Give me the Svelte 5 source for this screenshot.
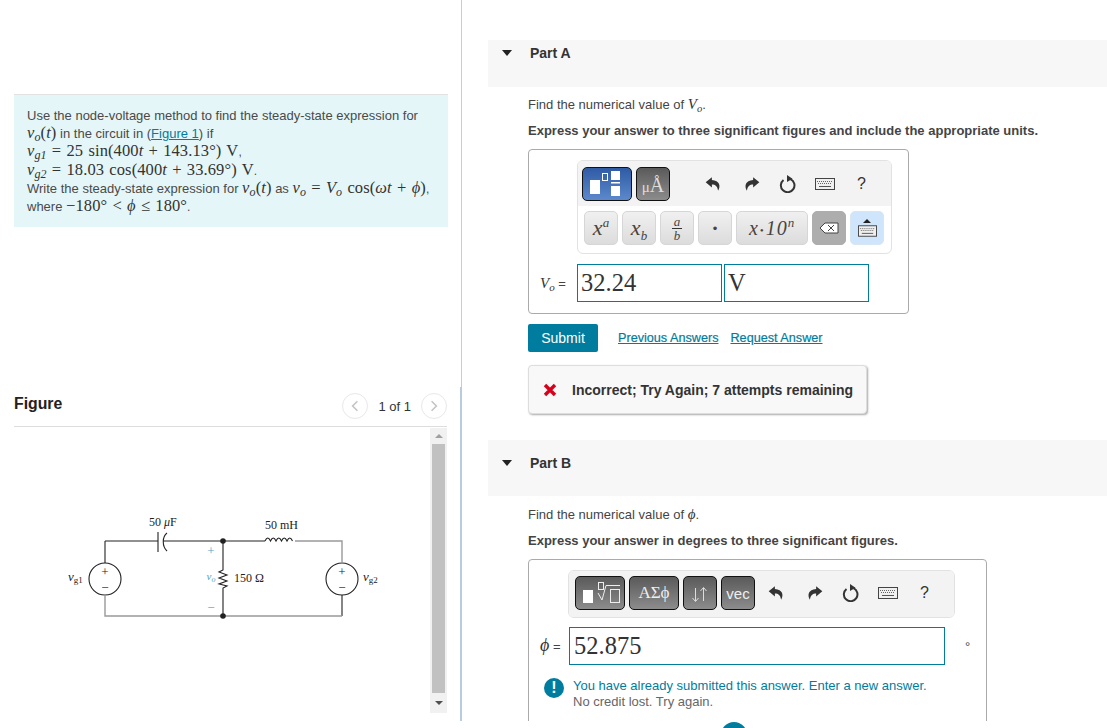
<script>
  const lines = ["You have already submitted this answer. Enter a new answer.", "No credit lost. Try again."];
</script>

{#snippet undo()}
  <svg class="ico" viewBox="0 0 16 16" width="18" height="18"><path d="M7 2 L1.500 6.500 L7 11 V8.500 C10 8.500 12 10 12.500 14 C15 10 14 5 7 4.500 Z" fill="#333" /></svg>
{/snippet}
{#snippet redo()}
  <svg class="ico" viewBox="0 0 16 16" width="18" height="18"><path d="M9 2 L14.500 6.500 L9 11 V8.500 C6 8.500 4 10 3.500 14 C1 10 2 5 9 4.500 Z" fill="#333" /></svg>
{/snippet}
{#snippet reset()}
  <svg class="ico" viewBox="0 0 18 18" width="18" height="18"><path d="M4.500 5 A6.800 6.800 0 1 0 11.500 4.200" fill="none" stroke="#333" stroke-width="2" /><path d="M8 0 L13.500 3.800 L8 7 Z" fill="#333" /></svg>
{/snippet}
{#snippet keys(w = 20)}
  <svg class="ico" viewBox="0 0 20 12" width={w} height="12">
    <rect x="0.500" y="0.500" width="19" height="11" fill="#f0f0f0" stroke="#444" />
    <path d="M2 3.500 H18 M3 5.500 H17" stroke="#666" stroke-dasharray="1 1" />
    <path d="M4 8.500 H16" stroke="#555" />
  </svg>
{/snippet}

<div class="page">
  <section class="left">
    <div class="problem">
      <p>Use the node-voltage method to find the steady-state expression for</p>
      <p><span class="m"><i>v<sub>o</sub></i>(<i>t</i>)</span> in the circuit in (<a href="#f">Figure 1</a>) if</p>
      <p><span class="m"><i>v<sub>g1</sub></i> = 25 sin(400<i>t</i> + 143.13°) V</span><small>,</small></p>
      <p><span class="m"><i>v<sub>g2</sub></i> = 18.03 cos(400<i>t</i> + 33.69°) V</span><small>.</small></p>
      <p>Write the steady-state expression for <span class="m"><i>v<sub>o</sub></i>(<i>t</i>)</span> as <span class="m"><i>v<sub>o</sub></i> = <i>V<sub>o</sub></i> cos(<i>ωt</i> + <i>ϕ</i>)</span><small>,</small></p>
      <p>where <span class="m">−180° &lt; <i>ϕ</i> ≤ 180°</span><small>.</small></p>
    </div>

    <div class="fig-head">
      <h2>Figure</h2>
      <div class="pager">
        <span class="round"><svg viewBox="0 0 10 14" width="8" height="12"><path d="M8 1 L2 7 L8 13" fill="none" stroke="#c4c4c4" stroke-width="2" /></svg></span>
        <span class="count">1 of 1</span>
        <span class="round"><svg viewBox="0 0 10 14" width="8" height="12"><path d="M2 1 L8 7 L2 13" fill="none" stroke="#c4c4c4" stroke-width="2" /></svg></span>
      </div>
    </div>

    <div class="fig-body">
      <svg class="circuit" viewBox="0 -3 416 285" width="416" height="285">
        <g fill="none" stroke="#222" stroke-width="1.100">
          <path d="M91 110 H144" />
          <path d="M91 110 V132" />
          <path d="M144 101 V121 M153 102 C148 106 148 115 153 120" />
          <path d="M149 110 H251" />
          <path d="M209 110 V139 L205 141 L213 144 L205 147 L213 150 L205 153 L213 155 L209 157 V185" />
          <path d="M251 110 q2.750 -6 5.500 0 q2.750 -6 5.500 0 q2.750 -6 5.500 0 q2.750 -6 5.500 0 q2.750 -6 5.500 0" />
          <circle cx="91" cy="148" r="16" />
          <circle cx="328" cy="148" r="16" />
          <path d="M328 164 V185" />
          <path d="M91 164 V185 H328" stroke="#999" stroke-width="1.400" />
          <path d="M281 110 H328 V132" stroke="#999" stroke-width="1.400" />
        </g>
        <circle cx="209" cy="110" r="2.800" fill="#222" />
        <circle cx="209" cy="185" r="2.800" fill="#222" />
        <g fill="#222" font-family="Liberation Serif, serif" font-size="12">
          <text x="135" y="95">50 <tspan font-style="italic">μ</tspan>F</text>
          <text x="251" y="98">50 mH</text>
          <text x="220" y="151">150 Ω</text>
          <g text-anchor="middle" font-size="13">
            <text x="91" y="145">+</text>
            <text x="91" y="161">−</text>
            <text x="328" y="145">+</text>
            <text x="328" y="161">−</text>
          </g>
          <text x="54" y="150" font-style="italic" font-size="13">v<tspan font-size="9" dy="2" font-style="normal">g1</tspan></text>
          <text x="349" y="150" font-style="italic" font-size="13">v<tspan font-size="9" dy="2" font-style="normal">g2</tspan></text>
        </g>
        <g fill="#4ea6c8" font-family="Liberation Serif, serif" font-size="13" text-anchor="middle">
          <text x="197" y="124">+</text>
          <text x="197" y="181">−</text>
          <text x="197" y="149" font-size="11" font-style="italic">v<tspan font-size="8" dy="2">o</tspan></text>
        </g>
      </svg>
      <div class="scroll">
        <div class="cap up-cap"><span class="up"></span></div>
        <span class="thumb"></span>
        <div class="cap down-cap"><span class="down"></span></div>
      </div>
    </div>
    <span class="resizer"></span>
  </section>

  <section class="right">
    <header class="part part-a"><span class="tri"></span><b>Part A</b></header>
    <p class="q">Find the numerical value of <span class="m"><i>V<sub>o</sub></i></span>.</p>
    <p class="q strong">Express your answer to three significant figures and include the appropriate units.</p>

    <div class="answer a">
      <div class="tools">
        <div class="tools-top">
          <button class="tb blue" aria-label="templates">
            <svg viewBox="0 0 48 32" width="48" height="32"><rect x="7" y="12" width="10" height="14" fill="#fff" /><rect x="19.500" y="5.500" width="5" height="7" fill="none" stroke="#fff" /><rect x="28" y="3" width="9" height="9" fill="#fff" /><rect x="28" y="14" width="9" height="1.500" fill="#fff" /><rect x="28" y="18" width="9" height="10" fill="#fff" /></svg>
          </button>
          <button class="tb dark ua"><span class="mu">μ</span><span>Å</span></button>
          <div class="actions aa">
            {@render undo()}
            {@render redo()}
            {@render reset()}
            {@render keys()}
            <span class="help">?</span>
          </div>
        </div>
        <div class="tools-bot">
          <button class="key mi"><span>x<sup>a</sup></span></button>
          <button class="key mi"><span>x<sub>b</sub></span></button>
          <button class="key frac"><span>a</span><span>b</span></button>
          <button class="key dot">•</button>
          <button class="key w72 mi"><span>x<span class="mdot">•</span>10<sup>n</sup></span></button>
          <button class="key del" aria-label="delete">
            <svg viewBox="0 0 20 12" width="20" height="12"><path d="M6 1 H19 V11 H6 L1 6 Z" fill="#fff" stroke="#444" /><path d="M9 3 L15 9 M15 3 L9 9" stroke="#444" /></svg>
          </button>
          <button class="key kb" aria-label="keyboard">
            <span class="caret"></span>
            {@render keys(19)}
          </button>
        </div>
      </div>
      <div class="inputs">
        <span class="lbl"><span class="m"><i>V<sub>o</sub></i></span> =</span>
        <div class="field f1">32.24</div>
        <div class="field f2">V</div>
      </div>
    </div>

    <div class="submit-row">
      <button class="submit">Submit</button>
      <a href="#p">Previous Answers</a>
      <a href="#r">Request Answer</a>
    </div>

    <div class="alert">
      <svg viewBox="0 0 14 14" width="14" height="14"><path d="M2 2 L12 12 M12 2 L2 12" stroke="#d9001b" stroke-width="3.400" /></svg>
      <span>Incorrect; Try Again; 7 attempts remaining</span>
    </div>

    <header class="part part-b"><span class="tri"></span><b>Part B</b></header>
    <p class="q">Find the numerical value of <span class="m"><i>ϕ</i></span>.</p>
    <p class="q strong">Express your answer in degrees to three significant figures.</p>

    <div class="answer b">
      <div class="tools wide">
        <div class="tools-top">
          <button class="tb dark w50" aria-label="templates">
            <svg viewBox="0 0 48 32" width="48" height="32"><rect x="7" y="13" width="10" height="13" fill="#fff" /><rect x="22.500" y="5.500" width="5" height="7" fill="none" stroke="#eee" /><path d="M22 16 L26 23 L30 8.500 H44" fill="none" stroke="#eee" /><rect x="34.500" y="12.500" width="9" height="13" fill="none" stroke="#eee" /></svg>
          </button>
          <button class="tb dark w50 greek">ΑΣϕ</button>
          <button class="tb dark" aria-label="arrows">
            <svg viewBox="0 0 32 32" width="32" height="32"><path d="M11.500 11 V24 M8.500 21 L11.500 24.500 L14.500 21 M19.500 24 V11 M16.500 14 L19.500 10.500 L22.500 14" fill="none" stroke="#ddd" stroke-width="1" /></svg>
          </button>
          <button class="tb dark vec">vec</button>
          <div class="actions ab">
            {@render undo()}
            {@render redo()}
            {@render reset()}
            {@render keys()}
            <span class="help">?</span>
          </div>
        </div>
      </div>
      <div class="inputs phi">
        <span class="lbl"><span class="m"><i>ϕ</i></span> =</span>
        <div class="field f3">52.875</div>
        <span class="deg">°</span>
      </div>
      <div class="msg">
        <span class="bang">!</span>
        <div>
          <p class="teal">{lines[0]}</p>
          <p>{lines[1]}</p>
        </div>
      </div>
    </div>
  </section>
  <span class="fab"></span>
</div>

<style>
  :global(body) {
    margin: 0;
    background: #fff;
  }
  .page {
    position: relative;
    display: flex;
    width: 1107px;
    height: 728px;
    overflow: hidden;
    font-family: "Liberation Sans", Arial, sans-serif;
    font-size: 13px;
    color: #444;
  }
  p {
    margin: 0;
  }
  button {
    font-family: inherit;
    padding: 0;
    cursor: pointer;
  }
  .m {
    font-family: "Liberation Serif", serif;
    font-size: 16.500px;
    line-height: 0;
    color: #333;
  }
  .m sub {
    font-size: 12px;
    line-height: 0;
    vertical-align: -3px;
  }
  .problem .m {
    word-spacing: 1px;
    letter-spacing: 0.1px;
  }
  small {
    font-size: 12px;
  }

  .left {
    position: relative;
    box-sizing: border-box;
    flex: none;
    width: 462px;
    height: 721px;
    padding: 94px 0 0 14px;
    border-right: 1px solid #ccc;
  }
  .resizer {
    position: absolute;
    top: 387px;
    bottom: 0;
    left: 460px;
    width: 2px;
    background: #b8cce0;
  }
  .problem {
    box-sizing: border-box;
    width: 434px;
    height: 133px;
    padding: 12px 13px 0;
    background: #e5f6f8;
    border-top: 1px solid #e2e2e2;
    line-height: 18.200px;
    white-space: nowrap;
    color: #4a4a4a;
  }
  .problem a {
    color: #007c9e;
  }
  .fig-head {
    box-sizing: border-box;
    display: flex;
    justify-content: space-between;
    align-items: center;
    width: 433px;
    height: 50px;
    margin-top: 150px;
    border-bottom: 1px solid #ddd;
  }
  .fig-head h2 {
    margin: 4px 0 0;
    font-size: 15.800px;
    color: #222;
  }
  .pager {
    display: flex;
    align-items: center;
    gap: 10px;
    margin-top: 9px;
    font-size: 13px;
    color: #333;
  }
  .round {
    display: flex;
    align-items: center;
    justify-content: center;
    width: 26px;
    height: 26px;
    box-sizing: border-box;
    border: 1px solid #e8e8e8;
    border-radius: 50%;
  }
  .fig-body {
    display: flex;
    width: 433px;
    padding-top: 1px;
  }
  .circuit {
    flex: none;
    display: block;
  }
  .scroll {
    display: flex;
    flex-direction: column;
    align-items: center;
    width: 17px;
    height: 285px;
    background: #f1f1f1;
  }
  .scroll .thumb {
    width: 13px;
    flex: 1;
    background: #c1c1c1;
  }
  .cap {
    display: flex;
    align-items: center;
    justify-content: center;
  }
  .up-cap {
    height: 16px;
  }
  .down-cap {
    height: 20px;
  }
  .up,
  .down {
    width: 0;
    height: 0;
    border-left: 4px solid transparent;
    border-right: 4px solid transparent;
  }
  .up {
    border-bottom: 4px solid #a0a0a0;
  }
  .down {
    border-top: 4px solid #505050;
  }

  .right {
    box-sizing: border-box;
    flex: 1;
    height: 721px;
    overflow: hidden;
    padding: 40px 0 0 26px;
    min-width: 0;
  }
  .part {
    box-sizing: border-box;
    display: flex;
    align-items: flex-start;
    background: #f7f7f7;
    font-size: 14px;
    color: #333;
  }
  .part-a {
    height: 47px;
    margin-bottom: 9px;
    padding-top: 5px;
  }
  .part-b {
    height: 56px;
    margin-top: 26px;
    margin-bottom: 10px;
    padding-top: 15px;
  }
  .tri {
    width: 0;
    height: 0;
    margin: 5px 18px 0 14px;
    border-left: 5.500px solid transparent;
    border-right: 5.500px solid transparent;
    border-top: 6px solid #222;
  }
  .q {
    margin-left: 40px;
    height: 26px;
    line-height: 18px;
    color: #444;
  }
  .q .m {
    font-size: 15px;
  }
  .q .m sub {
    font-size: 10.500px;
  }
  .strong {
    font-weight: 700;
  }
  .answer {
    box-sizing: border-box;
    margin: 1px 0 0 40px;
    border: 1px solid #aaa;
    border-radius: 4px;
  }
  .answer.a {
    width: 381px;
    height: 165px;
    padding: 10px 0 0 48px;
  }
  .answer.b {
    width: 459px;
    height: 200px;
    padding: 10px 0 0 39px;
  }
  .tools {
    box-sizing: border-box;
    width: 315px;
    border: 1px solid #e2e2e2;
    border-radius: 6px;
    overflow: hidden;
  }
  .tools.wide {
    width: 387px;
  }
  .tools-top {
    box-sizing: border-box;
    display: flex;
    align-items: center;
    gap: 4px;
    height: 45px;
    padding-left: 4px;
    background: #f3f3f3;
  }
  .wide .tools-top {
    height: 46px;
    padding-bottom: 2px;
    padding-left: 6px;
  }
  .tools-bot {
    display: flex;
    gap: 4px;
    height: 47px;
    padding: 5px 0 0 6px;
    box-sizing: border-box;
  }
  .tb {
    box-sizing: border-box;
    display: flex;
    align-items: center;
    justify-content: center;
    width: 34px;
    height: 34px;
    border: 1px solid #111;
    border-radius: 5px;
    color: #eee;
  }
  .tb svg {
    flex: none;
    display: block;
  }
  .blue {
    width: 50px;
    background: linear-gradient(#2f5ba5, #5c88cc);
  }
  .dark {
    background: linear-gradient(#5a5a5a, #8c8c8c);
  }
  .w50 {
    width: 50px;
  }
  .ua {
    font-family: "Liberation Serif", serif;
    font-size: 20px;
    align-items: baseline;
    line-height: 34px;
    color: #ddd;
  }
  .mu {
    font-size: 15px;
  }
  .greek {
    font-family: "Liberation Serif", serif;
    font-size: 17px;
  }
  .vec {
    font-size: 15px;
  }
  .actions {
    display: flex;
    align-items: center;
  }
  .actions > :nth-child(2) {
    margin-left: 21px;
  }
  .actions > :nth-child(3) {
    margin-left: 18px;
  }
  .actions > :nth-child(4) {
    margin-left: 18px;
  }
  .actions > :nth-child(5) {
    margin-left: 22px;
  }
  .ico {
    flex: none;
    display: block;
  }
  .aa {
    margin-left: 30px;
  }
  .ab {
    margin-left: 8px;
  }
  .help {
    font-size: 16px;
    color: #333;
  }
  .key {
    box-sizing: border-box;
    display: flex;
    align-items: center;
    justify-content: center;
    width: 34px;
    height: 34px;
    border: 1px solid #d6d6d6;
    border-radius: 5px;
    background: linear-gradient(#f0f0f0, #dcdcdc);
    color: #444;
  }
  .w72 {
    width: 72px;
  }
  .mi {
    font-family: "Liberation Serif", serif;
    font-style: italic;
    font-size: 22px;
    line-height: 1;
  }
  .mi sup,
  .mi sub {
    font-size: 13px;
    line-height: 0;
  }
  .w72.mi {
    font-size: 20px;
    letter-spacing: 1px;
  }
  .w72 sup {
    font-size: 13px;
  }
  .mdot {
    margin: 0 1px;
    font-size: 11px;
    vertical-align: 1px;
  }
  .frac {
    flex-direction: column;
    font-family: "Liberation Serif", serif;
    font-style: italic;
    font-size: 13px;
    line-height: 13px;
  }
  .frac span:first-child {
    border-bottom: 1px solid #333;
    padding: 0 2px;
  }
  .dot {
    font-size: 13px;
  }
  .del {
    background: #adadad;
    border-color: #adadad;
  }
  .kb {
    flex-direction: column;
    gap: 2px;
    background: #cfe5fb;
    border-color: #d8e6f3;
  }
  .caret {
    border-left: 4px solid transparent;
    border-right: 4px solid transparent;
    border-bottom: 4px solid #222;
  }
  .inputs {
    display: flex;
    align-items: center;
    gap: 2px;
    margin: 10px 0 0 -37px;
  }
  .lbl {
    width: 37px;
    margin-right: -2px;
    white-space: nowrap;
    font-size: 13px;
  }
  .lbl .m {
    font-size: 15px;
  }
  .lbl .m sub {
    font-size: 11px;
  }
  .field {
    box-sizing: border-box;
    height: 38px;
    padding-left: 3px;
    border: 1px solid #007c9e;
    font-family: "Liberation Serif", serif;
    font-size: 24.500px;
    line-height: 36px;
    color: #333;
  }
  .f1,
  .f2 {
    width: 145px;
  }
  .phi {
    margin: 9px 0 0 -28px;
  }
  .phi .lbl {
    width: 29px;
  }
  .phi .lbl .m {
    font-size: 18px;
  }
  .f3 {
    width: 376px;
    padding-left: 4px;
  }
  .deg {
    margin-left: 18px;
    font-size: 13px;
  }
  .msg {
    display: flex;
    gap: 9px;
    margin: 13px 0 0 -24px;
    line-height: 16px;
    color: #666;
  }
  .teal {
    color: #007c9e;
  }
  .bang {
    flex: none;
    display: flex;
    align-items: center;
    justify-content: center;
    width: 20px;
    height: 20px;
    border-radius: 50%;
    background: #007c9e;
    color: #fff;
    font-weight: 700;
    font-size: 16px;
  }
  .submit-row {
    display: flex;
    align-items: center;
    margin: 10px 0 0 40px;
  }
  .submit {
    width: 70px;
    height: 28px;
    margin-right: 20px;
    border: 0;
    border-radius: 2px;
    background: #007c9e;
    color: #fff;
    font-size: 14px;
  }
  .submit-row a {
    margin: -1px 12px 0 0;
    color: #007c9e;
    font-size: 12.650px;
    -webkit-text-stroke: 0.2px #007c9e;
  }
  .alert {
    box-sizing: border-box;
    display: flex;
    align-items: center;
    gap: 15px;
    width: 339px;
    height: 49px;
    margin: 13px 0 0 40px;
    padding-left: 14px;
    border: 1px solid #ddd;
    border-radius: 4px;
    background: #f8f8f8;
    box-shadow: 1px 1px 2px #aaa;
    font-weight: 700;
    font-size: 14px;
    color: #333;
  }
  .fab {
    position: absolute;
    left: 721px;
    top: 722px;
    width: 26px;
    height: 26px;
    border-radius: 50%;
    background: #007c9e;
  }
</style>
